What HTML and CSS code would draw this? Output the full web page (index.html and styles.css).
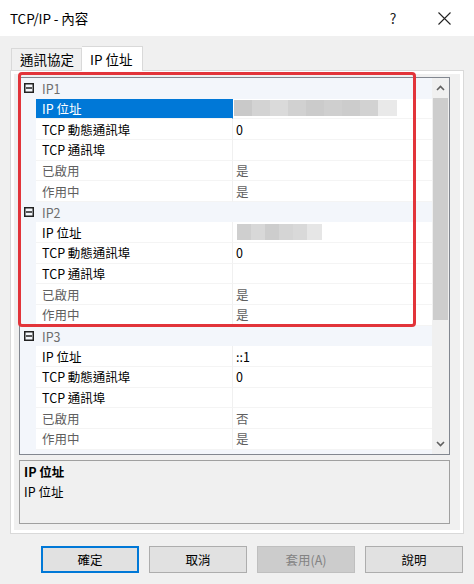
FILE: index.html
```html
<!DOCTYPE html>
<html lang="zh-Hant">
<head>
<meta charset="utf-8">
<title>TCP/IP - 內容</title>
<link rel="stylesheet" href="styles.css">
</head>
<body>
<div class="window">
  <div class="titlebar">
    <span class="title">TCP/IP - 內容</span>
    <span class="help">?</span>
    <span class="close"><svg width="13" height="13" viewBox="0 0 13 13"><path d="M0.5 0.5 L12.5 12.5 M12.5 0.5 L0.5 12.5" stroke="#222" stroke-width="1.1" fill="none"/></svg></span>
  </div>
  <div class="tabs">
    <div class="tab">通訊協定</div>
    <div class="tab active">IP 位址</div>
  </div>
  <div class="panel">
    <div class="pg">
      <div class="grid">
        <div class="rows">
          <div class="cat"><span class="gut"><svg class="tog" width="10" height="10" viewBox="0 0 10 10"><rect x="0.75" y="0.75" width="8.5" height="8.5" fill="none" stroke="#222" stroke-width="1.5"/><path d="M2 5 H8" stroke="#222" stroke-width="1.5"/></svg></span><span class="clabel">IP1</span></div>
          <div class="prop sel"><span class="gut"></span><span class="name">IP 位址</span><span class="val"><span class="blur blur1"></span></span></div>
          <div class="prop"><span class="gut"></span><span class="name">TCP 動態通訊埠</span><span class="val">0</span></div>
          <div class="prop"><span class="gut"></span><span class="name">TCP 通訊埠</span><span class="val"></span></div>
          <div class="prop"><span class="gut"></span><span class="name ro">已啟用</span><span class="val ro">是</span></div>
          <div class="prop"><span class="gut"></span><span class="name ro">作用中</span><span class="val ro">是</span></div>

          <div class="cat"><span class="gut"><svg class="tog" width="10" height="10" viewBox="0 0 10 10"><rect x="0.75" y="0.75" width="8.5" height="8.5" fill="none" stroke="#222" stroke-width="1.5"/><path d="M2 5 H8" stroke="#222" stroke-width="1.5"/></svg></span><span class="clabel">IP2</span></div>
          <div class="prop"><span class="gut"></span><span class="name">IP 位址</span><span class="val"><span class="blur blur2"></span></span></div>
          <div class="prop"><span class="gut"></span><span class="name">TCP 動態通訊埠</span><span class="val">0</span></div>
          <div class="prop"><span class="gut"></span><span class="name">TCP 通訊埠</span><span class="val"></span></div>
          <div class="prop"><span class="gut"></span><span class="name ro">已啟用</span><span class="val ro">是</span></div>
          <div class="prop"><span class="gut"></span><span class="name ro">作用中</span><span class="val ro">是</span></div>

          <div class="cat"><span class="gut"><svg class="tog" width="10" height="10" viewBox="0 0 10 10"><rect x="0.75" y="0.75" width="8.5" height="8.5" fill="none" stroke="#222" stroke-width="1.5"/><path d="M2 5 H8" stroke="#222" stroke-width="1.5"/></svg></span><span class="clabel">IP3</span></div>
          <div class="prop"><span class="gut"></span><span class="name">IP 位址</span><span class="val">::1</span></div>
          <div class="prop"><span class="gut"></span><span class="name">TCP 動態通訊埠</span><span class="val">0</span></div>
          <div class="prop"><span class="gut"></span><span class="name">TCP 通訊埠</span><span class="val"></span></div>
          <div class="prop"><span class="gut"></span><span class="name ro">已啟用</span><span class="val ro">否</span></div>
          <div class="prop"><span class="gut"></span><span class="name ro">作用中</span><span class="val ro">是</span></div>

          <div class="cat"><span class="gut"><svg class="tog" width="10" height="10" viewBox="0 0 10 10"><rect x="0.75" y="0.75" width="8.5" height="8.5" fill="none" stroke="#222" stroke-width="1.5"/><path d="M2 5 H8" stroke="#222" stroke-width="1.5"/></svg></span></div>
        </div>
        <div class="scrollbar">
          <span class="arrow"><svg width="9" height="6" viewBox="0 0 9 6"><path d="M1 5 L4.5 1.5 L8 5" fill="none" stroke="#606060" stroke-width="1.6"/></svg></span>
          <span class="track"><span class="thumb"></span></span>
          <span class="arrow"><svg width="9" height="6" viewBox="0 0 9 6"><path d="M1 1 L4.5 4.5 L8 1" fill="none" stroke="#606060" stroke-width="1.6"/></svg></span>
        </div>
      </div>
      <div class="desc">
        <div class="dtitle">IP 位址</div>
        <div class="dtext">IP 位址</div>
      </div>
    </div>
  </div>
  <div class="buttons">
    <button class="btn default">確定</button>
    <button class="btn">取消</button>
    <button class="btn disabled">套用(A)</button>
    <button class="btn">說明</button>
  </div>
  <div class="highlight"></div>
</div>
</body>
</html>
```

FILE: styles.css
```css
* { box-sizing: border-box; }
html, body { margin: 0; padding: 0; }
body {
  width: 474px;
  height: 584px;
  background: #f0f0f0;
  font-family: "Noto Sans CJK TC", "Noto Sans", sans-serif;
  color: #000;
  overflow: hidden;
}
.window {
  position: relative;
  width: 474px;
  height: 584px;
  display: flex;
  flex-direction: column;
}
.titlebar {
  height: 36px;
  background: #fff;
  display: flex;
  align-items: center;
  padding-left: 10px;
  font-size: 13.5px;
}
.title { flex: 1; letter-spacing: -0.1px; }
.help {
  width: 20px;
  margin-right: 31px;
  text-align: center;
  font-size: 14px;
  color: #222;
}
.close {
  width: 20px;
  margin-right: 20px;
  display: flex;
  justify-content: center;
  align-items: center;
}
.tabs {
  display: flex;
  align-items: flex-end;
  height: 24px;
  margin-top: 10px;
  padding-left: 11px;
  position: relative;
  z-index: 2;
}
.tab {
  height: 22px;
  padding: 0 7px 0 8px;
  font-size: 13.5px;
  line-height: 21px;
  background: #f0f0f0;
  border: 1px solid #d9d9d9;
  border-bottom: none;
  color: #000;
}
.tab.active {
  height: 25px;
  margin-bottom: -1px;
  background: #fff;
  padding: 0 9px 0 8px;
  line-height: 24px;
  border-color: #d9d9d9;
  border-left: none;
}
.panel {
  margin: 0 10px;
  height: 464px;
  background: #fff;
  border: 1px solid #d9d9d9;
  padding: 3px;
}
.pg {
  height: 100%;
  background: #f0f0f0;
  padding: 3px 8px 0 5px;
  display: flex;
  flex-direction: column;
}
.grid {
  height: 378px;
  width: 431px;
  border: 1px solid #828790;
  background: #fff;
  display: flex;
  overflow: hidden;
}
.rows {
  width: 412px;
  overflow: hidden;
  font-size: 12.5px;
}
.cat, .prop {
  height: 20.65px;
  display: flex;
  align-items: stretch;
}
.cat { background: #f3f6fb; }
.gut {
  width: 16px;
  flex: none;
  background: #f3f6fb;
  display: flex;
  align-items: center;
  padding-left: 4px;
}
.clabel {
  padding-left: 6px;
  color: #6d6d6d;
  display: flex;
  align-items: center;
}
.name {
  width: 197px;
  flex: none;
  padding-left: 6px;
  display: flex;
  align-items: center;
  border-right: 1px solid #f0f0f0;
  border-bottom: 1px solid #f4f4f4;
  white-space: nowrap;
}
.val {
  flex: 1;
  padding-left: 3px;
  display: flex;
  align-items: center;
  border-bottom: 1px solid #f4f4f4;
}
.ro { color: #5f5f5f; }
.prop.sel .name {
  background: #0078d7;
  color: #fff;
  border-right-color: #0078d7;
}
.blur { display: block; height: 16px; }
.blur1 {
  width: 163px;
  margin-left: -2px;
  background: linear-gradient(90deg,
    #c9c9c9 0 18px, #d3d3d3 18px 36px, #dadada 36px 54px, #d1d1d1 54px 72px,
    #cbcbcb 72px 90px, #cfcfcf 90px 108px, #cccccc 108px 126px, #d2d2d2 126px 144px,
    #e9e9e9 144px 163px);
}
.blur2 {
  width: 85px;
  margin-left: 1px;
  background: linear-gradient(90deg,
    #cfcfcf 0 14px, #d8d8d8 14px 28px, #cdcdcd 28px 42px, #d5d5d5 42px 56px,
    #d9d9d9 56px 70px, #e6e6e6 70px 85px);
}
.tog { display: block; }
.scrollbar {
  width: 17px;
  flex: none;
  background: #f0f0f0;
  display: flex;
  flex-direction: column;
}
.arrow {
  height: 20px;
  flex: none;
  display: flex;
  align-items: center;
  justify-content: center;
}
.track {
  flex: 1;
  display: flex;
  flex-direction: column;
  padding: 0 1px;
}
.thumb {
  height: 222px;
  background: #cdcdcd;
}
.desc {
  margin-top: 5px;
  width: 431px;
  height: 64px;
  border: 1px solid #a0a0a0;
  background: #f0f0f0;
  padding: 1px 4px;
  font-size: 12.5px;
}
.dtitle { font-weight: bold; line-height: 20px; }
.dtext { line-height: 20px; }
.buttons {
  display: flex;
  gap: 10px;
  padding-left: 41px;
  margin-top: 12px;
}
.btn {
  width: 98px;
  height: 27px;
  background: #e1e1e1;
  border: 1px solid #adadad;
  font-family: "Noto Sans CJK TC", "Noto Sans", sans-serif;
  font-size: 12.5px;
  color: #000;
  padding: 0;
}
.btn.default {
  border: 2px solid #0078d7;
}
.btn.disabled {
  background: #cccccc;
  border-color: #bfbfbf;
  color: #838383;
}
.highlight {
  position: absolute;
  left: 18px;
  top: 72px;
  width: 398px;
  height: 255px;
  border: 3px solid #e2343a;
  border-radius: 4px;
  pointer-events: none;
}
```
